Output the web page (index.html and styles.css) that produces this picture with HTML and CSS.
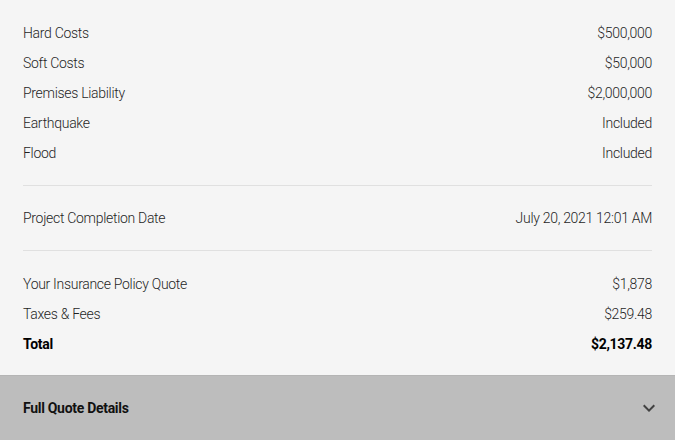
FILE: index.html
```html
<!DOCTYPE html>
<html>
<head>
<meta charset="utf-8">
<link rel="stylesheet" href="styles.css">
</head>
<body>
<div class="card">
  <section class="group group-first">
    <div class="row"><span>Hard Costs</span><span>$500,000</span></div>
    <div class="row"><span>Soft Costs</span><span>$50,000</span></div>
    <div class="row"><span>Premises Liability</span><span>$2,000,000</span></div>
    <div class="row"><span>Earthquake</span><span>Included</span></div>
    <div class="row"><span>Flood</span><span>Included</span></div>
  </section>
  <hr class="divider">
  <section class="group group-mid">
    <div class="row"><span>Project Completion Date</span><span>July 20, 2021 12:01 AM</span></div>
  </section>
  <hr class="divider">
  <section class="group group-last">
    <div class="row"><span>Your Insurance Policy Quote</span><span>$1,878</span></div>
    <div class="row"><span>Taxes &amp; Fees</span><span>$259.48</span></div>
    <div class="row total"><span>Total</span><span>$2,137.48</span></div>
  </section>
  <div class="details">
    <span class="details-title">Full Quote Details</span>
    <svg class="chev" width="24" height="24" viewBox="0 0 24 24"><path d="M16.59 8.59L12 13.17 7.41 8.59 6 10l6 6 6-6z" fill="#424242"/></svg>
  </div>
</div>
</body>
</html>
```
FILE: styles.css
```css
html, body {
  margin: 0;
  padding: 0;
  background: #f5f5f5;
}
body {
  font-family: Roboto, "Liberation Sans", sans-serif;
  font-size: 14px;
  letter-spacing: -0.3px;
  font-weight: 300;
  color: #1f1f1f;
  width: 675px;
  height: 440px;
  overflow: hidden;
}
.card {
  display: flex;
  flex-direction: column;
}
.group {
  padding: 0 23px;
}
.group-first {
  padding-top: 18px;
  padding-bottom: 17px;
}
.group-mid {
  padding-top: 17px;
  padding-bottom: 17px;
}
.group-last {
  padding-top: 18px;
  padding-bottom: 17px;
}
.row {
  display: flex;
  justify-content: space-between;
  height: 30px;
  line-height: 30px;
}
.total {
  font-weight: 700;
  color: #000;
}
.divider {
  margin: 0 23px;
  border: 0;
  border-top: 1px solid #e0e0e0;
  height: 0;
}
.details {
  display: flex;
  align-items: center;
  justify-content: space-between;
  height: 64px;
  padding: 0 14px 0 23px;
  background: #bdbdbd;
  box-shadow: 0 -1px 0 #b5b5b5;
}
.details-title {
  font-weight: 700;
  color: #111;
}
.chev {
  display: block;
}
```
